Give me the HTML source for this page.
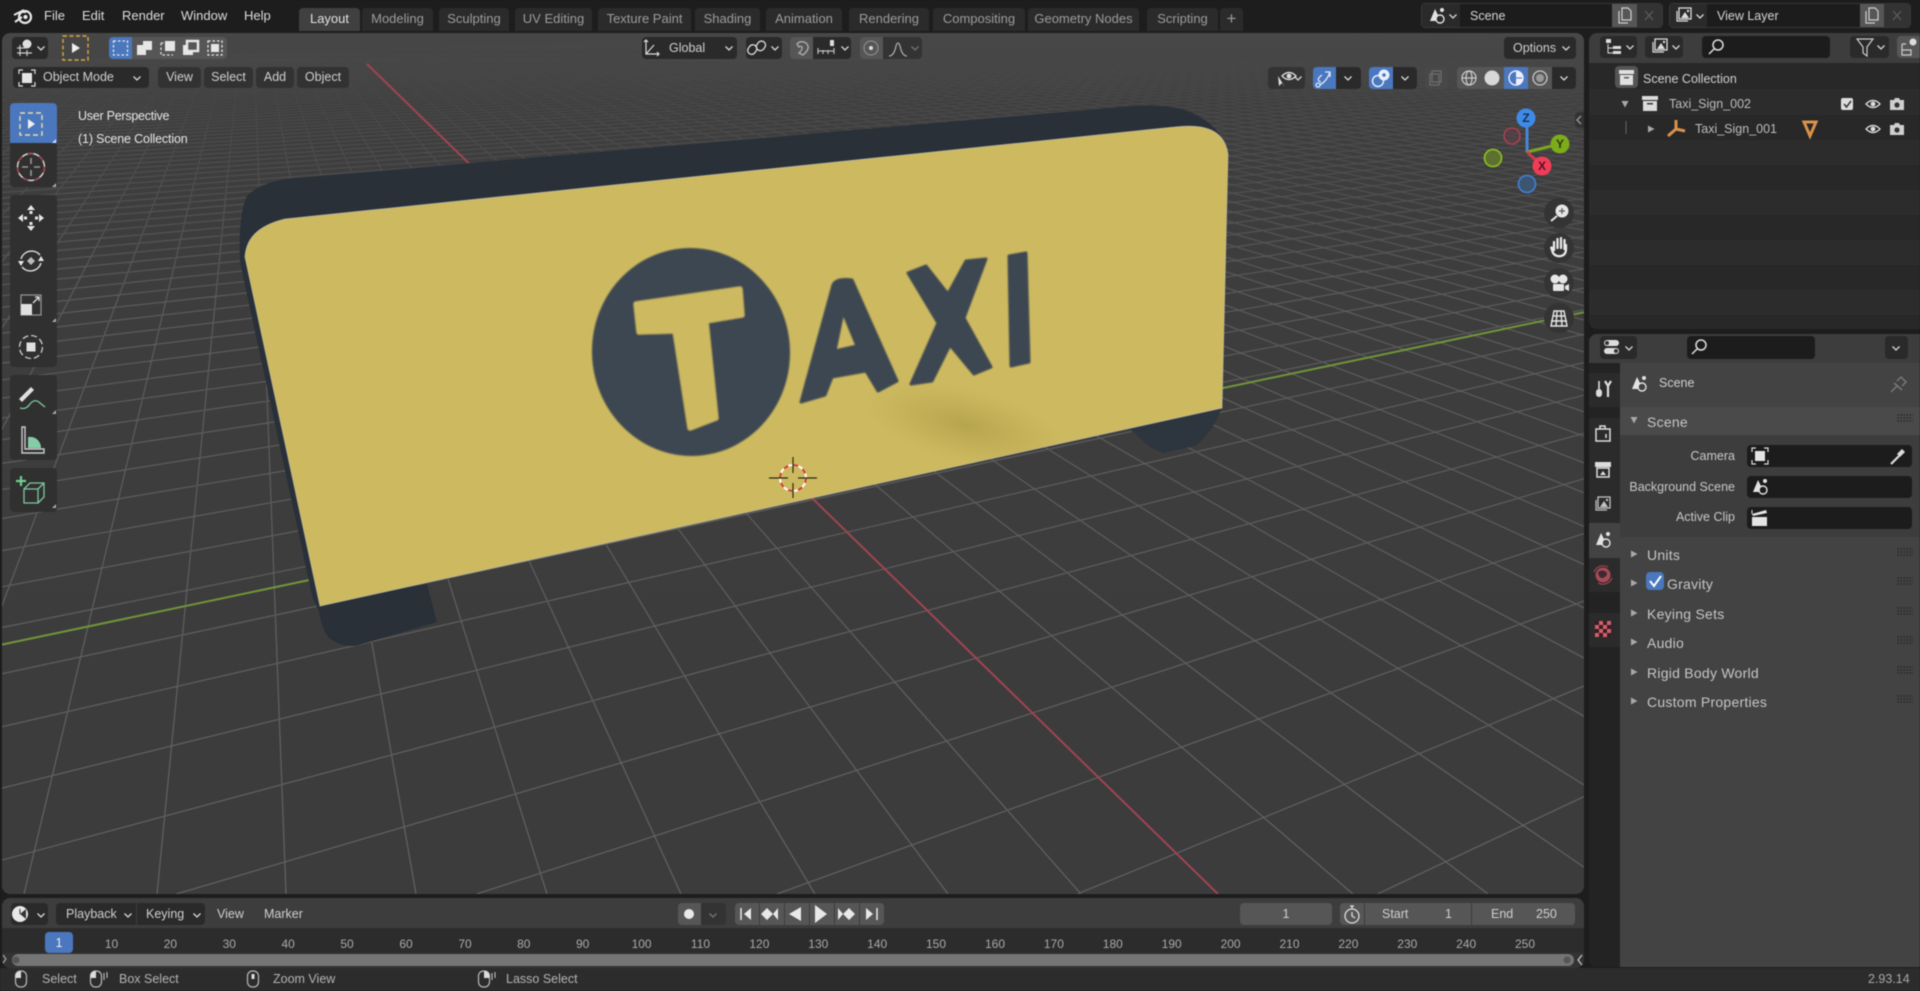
<!DOCTYPE html>
<html lang="en"><head><meta charset="utf-8"><title>Blender</title>
<style>
html,body{margin:0;padding:0;background:#1d1d1d;width:1920px;height:991px;overflow:hidden}
#r{position:absolute;left:0;top:0;width:1920px;height:991px;overflow:hidden;background:#1d1d1d;font:12.5px "Liberation Sans",sans-serif;color:#cfcfcf;filter:blur(.45px)}
#r div{position:absolute;box-sizing:border-box}
.t{white-space:nowrap;line-height:16px;height:16px}
.c{text-align:center}
.tab{top:8px;height:23px;background:#2b2b2b;border-radius:4px 4px 0 0;color:#9c9c9c;font-size:13px;line-height:22px;text-align:center;white-space:nowrap}
.d{background:#2a2a2a;border-radius:4px}
.m{background:#565656}
.b{background:#4a77bd}
.f{background:#1c1c1c;border-radius:4px}
.o{border:1px solid #383838;border-radius:4px;background:transparent}
.h{font-size:14px;letter-spacing:.25px;color:#c6c6c6}
.n{font-size:12px;color:#aaa;width:40px;text-align:center;top:936px}
svg{position:absolute;left:0;top:0}
</style></head><body><div id="r">

<!-- top bar tabs -->
<div class="t" style="left:44px;top:8px;color:#ddd;font-size:13px">File</div>
<div class="t" style="left:82px;top:8px;color:#ddd;font-size:13px">Edit</div>
<div class="t" style="left:122px;top:8px;color:#ddd;font-size:13px">Render</div>
<div class="t" style="left:181px;top:8px;color:#ddd;font-size:13px">Window</div>
<div class="t" style="left:244px;top:8px;color:#ddd;font-size:13px">Help</div>
<div class="tab" style="left:299px;width:61px;background:#404040;color:#e2e2e2">Layout</div>
<div class="tab" style="left:362px;width:71px">Modeling</div>
<div class="tab" style="left:439px;width:70px">Sculpting</div>
<div class="tab" style="left:515px;width:77px">UV Editing</div>
<div class="tab" style="left:598px;width:93px">Texture Paint</div>
<div class="tab" style="left:695px;width:65px">Shading</div>
<div class="tab" style="left:766px;width:76px">Animation</div>
<div class="tab" style="left:849px;width:80px">Rendering</div>
<div class="tab" style="left:933px;width:92px">Compositing</div>
<div class="tab" style="left:1028px;width:111px">Geometry Nodes</div>
<div class="tab" style="left:1147px;width:71px">Scripting</div>
<div class="tab" style="left:1220px;width:23px;font-size:17px">+</div>

<!-- scene / view layer -->
<div class="d" style="left:1422px;top:4px;width:38px;height:23px;border-radius:4px 0 0 4px"></div>
<div class="f" style="left:1460px;top:4px;width:152px;height:23px;border-radius:0"></div>
<div class="t" style="left:1470px;top:8px;color:#d4d4d4">Scene</div>
<div class="m" style="left:1612px;top:4px;width:25px;height:23px"></div>
<div style="left:1637px;top:4px;width:25px;height:23px;background:#333;border-radius:0 4px 4px 0"></div>
<div class="o" style="left:1421px;top:3px;width:242px;height:25px"></div>
<div class="d" style="left:1670px;top:4px;width:37px;height:23px;border-radius:4px 0 0 4px"></div>
<div class="f" style="left:1707px;top:4px;width:153px;height:23px;border-radius:0"></div>
<div class="t" style="left:1717px;top:8px;color:#d4d4d4">View Layer</div>
<div class="m" style="left:1860px;top:4px;width:24px;height:23px"></div>
<div style="left:1884px;top:4px;width:26px;height:23px;background:#333;border-radius:0 4px 4px 0"></div>
<div class="o" style="left:1669px;top:3px;width:242px;height:25px"></div>

<!-- viewport -->
<div id="vp" style="left:2px;top:33px;width:1582px;height:861px;border-radius:8px;overflow:hidden;background:linear-gradient(#474747 0,#454545 27px,#3e3e3e 70px,#3c3c3c 100%)">
<svg width="1582" height="861" viewBox="2 33 1582 861" xmlns="http://www.w3.org/2000/svg">
<defs>
<linearGradient id="fg" gradientUnits="userSpaceOnUse" x1="0" y1="50" x2="0" y2="894">
<stop offset="0" stop-color="#fff" stop-opacity=".05"/><stop offset=".08" stop-color="#fff" stop-opacity=".3"/><stop offset=".3" stop-color="#fff" stop-opacity=".8"/><stop offset="1" stop-color="#fff" stop-opacity="1"/></linearGradient>
<mask id="fm" maskUnits="userSpaceOnUse" x="0" y="0" width="1920" height="991"><rect width="1920" height="991" fill="url(#fg)"/></mask>
<radialGradient id="sm"><stop offset="0" stop-color="#a08f3c" stop-opacity=".5"/><stop offset=".6" stop-color="#ad9b45" stop-opacity=".25"/><stop offset="1" stop-color="#b8a64e" stop-opacity="0"/></radialGradient>
<filter id="bl" x="-10%" y="-10%" width="120%" height="120%"><feGaussianBlur stdDeviation=".9"/></filter>
<clipPath id="face"><path d="M245 257C246 240 256 226 285 219L1175 127C1202 124 1224 128 1228 154L1222 408L320 606Z"/></clipPath>
</defs>
<g id="grid" mask="url(#fm)" stroke="#636363" stroke-width="1.2" fill="none"></g>
<path d="M367 64L1218 894" stroke="#a04452" stroke-width="2" fill="none"/>
<path d="M0 645L1585 312" stroke="#71953a" stroke-width="2" fill="none"/>
<!-- feet -->
<path d="M314 600L319 612Q322 630 329 638Q345 650 362 644L437 622L427 584Z" fill="#293038"/>
<path d="M1125 425L1150 447L1163 453L1195 446Q1216 430 1224 400Z" fill="#2d353e"/>
<!-- back -->
<path d="M240 262Q238 215 247 196Q258 184 286 179L1122 107Q1160 103 1185 110Q1208 118 1220 135L1228 160L1222 300L320 606L313 600Z" fill="#293038"/>
<path d="M245 257C246 240 256 226 285 219L1175 127C1202 124 1224 128 1228 154L1222 408L320 606Z" fill="#cdba60" stroke="#b5b09a" stroke-width=".8"/>
<g clip-path="url(#face)"><ellipse cx="965" cy="425" rx="105" ry="38" transform="rotate(14 965 425)" fill="url(#sm)"/></g>
<!-- logo -->
<g filter="url(#bl)" fill="#3e4751">
<ellipse cx="691" cy="352" rx="99" ry="104" transform="rotate(-4 691 352)"/>
<path d="M636 304L740 289L742 315L706 321L716 418L690 428L675 331L639 332Z" fill="#cdba60" stroke="#cdba60" stroke-width="5" stroke-linejoin="round"/>
<g stroke="#3e4751" stroke-width="3" stroke-linejoin="round">
<path fill-rule="evenodd" d="M801 402L833 285Q836 278 852 280L897 381L878 391L866 371L832 377L825 395ZM843 312L835 351L857 346Z"/>
<path d="M908 273L926 266L948 294L966 261L986 259L964 318L991 367L974 374L950 345L932 381L911 384L938 323Z"/>
<path d="M1009 256L1026 253L1029 362L1011 366Z"/>
</g>
</g>
<!-- 3D cursor -->
<g transform="translate(793 478)" fill="none">
<circle r="13" stroke="#fff" stroke-width="2"/><circle r="13" stroke="#d03a28" stroke-width="2" stroke-dasharray="5 5.2"/>
<path d="M0-21V-5M0 5V20M-24 0H-5M5 0H24" stroke="#2b2b14" stroke-width="1.2"/>
</g>
</svg>
</div>

<!-- 3D header row 1 -->
<div class="d" style="left:12px;top:37px;width:36px;height:22px"></div>
<div class="d" style="left:109px;top:37px;width:118px;height:22px;background:#565656"></div>
<div class="b" style="left:109px;top:37px;width:23px;height:22px;border-radius:4px 0 0 4px"></div>
<div class="d" style="left:642px;top:37px;width:95px;height:22px"></div>
<div class="t" style="left:669px;top:40px">Global</div>
<div class="d" style="left:746px;top:37px;width:36px;height:22px"></div>
<div class="d" style="left:790px;top:37px;width:61px;height:22px"></div>
<div class="m" style="left:790px;top:37px;width:23px;height:22px;border-radius:4px 0 0 4px"></div>
<div class="d" style="left:860px;top:37px;width:62px;height:22px;background:#333"></div>
<div class="m" style="left:860px;top:37px;width:23px;height:22px;border-radius:4px 0 0 4px"></div>
<div class="d" style="left:1504px;top:37px;width:72px;height:22px"></div>
<div class="t" style="left:1513px;top:40px">Options</div>
<!-- row 2 -->
<div class="d" style="left:13px;top:67px;width:136px;height:21px"></div>
<div class="t" style="left:43px;top:69px">Object Mode</div>
<div class="d" style="left:158px;top:67px;width:43px;height:21px;background:#323232"></div>
<div class="t c" style="left:158px;width:43px;top:69px">View</div>
<div class="d" style="left:204px;top:67px;width:49px;height:21px;background:#323232"></div>
<div class="t c" style="left:204px;width:49px;top:69px">Select</div>
<div class="d" style="left:256px;top:67px;width:38px;height:21px;background:#323232"></div>
<div class="t c" style="left:256px;width:38px;top:69px">Add</div>
<div class="d" style="left:297px;top:67px;width:52px;height:21px;background:#323232"></div>
<div class="t c" style="left:297px;width:52px;top:69px">Object</div>
<!-- right row 2 -->
<div class="d" style="left:1268px;top:67px;width:37px;height:22px;background:#333"></div>
<div class="b" style="left:1313px;top:67px;width:23px;height:22px;border-radius:4px 0 0 4px"></div>
<div class="d" style="left:1336px;top:67px;width:25px;height:22px;border-radius:0 4px 4px 0"></div>
<div class="b" style="left:1369px;top:67px;width:24px;height:22px;border-radius:4px 0 0 4px"></div>
<div class="d" style="left:1393px;top:67px;width:24px;height:22px;border-radius:0 4px 4px 0"></div>
<div class="d" style="left:1425px;top:67px;width:23px;height:22px;background:#484848"></div>
<div class="m" style="left:1457px;top:67px;width:95px;height:22px;border-radius:4px 0 0 4px"></div>
<div class="b" style="left:1504px;top:67px;width:24px;height:22px"></div>
<div class="d" style="left:1552px;top:67px;width:24px;height:22px;border-radius:0 4px 4px 0"></div>

<div class="t" style="left:78px;top:108px;color:#e6e6e6;letter-spacing:-.25px">User Perspective</div>
<div class="t" style="left:78px;top:131px;color:#e6e6e6;letter-spacing:-.15px">(1) Scene Collection</div>

<!-- toolbar -->
<div class="d" style="left:10px;top:103px;width:47px;height:84px;background:#303030"></div>
<div class="b" style="left:10px;top:103px;width:47px;height:40px;border-radius:4px 4px 0 0"></div>
<div class="d" style="left:10px;top:195px;width:47px;height:172px;background:#303030"></div>
<div class="d" style="left:10px;top:375px;width:47px;height:85px;background:#303030"></div>
<div class="d" style="left:10px;top:468px;width:47px;height:44px;background:#303030"></div>
<div style="left:1575px;top:112px;width:9px;height:16px;background:#333;border-radius:4px 0 0 4px"></div>

<!-- outliner -->
<div style="left:1589px;top:33px;width:331px;height:296px;background:#282828;border-radius:8px 0 0 8px;overflow:hidden">
<div style="left:0;top:0;width:331px;height:30px;background:#3d3d3d"></div>
<div style="left:0;top:56px;width:331px;height:26px;background:#2c2c2c"></div>
<div style="left:0;top:107px;width:331px;height:25px;background:#2c2c2c"></div>
<div style="left:0;top:157px;width:331px;height:25px;background:#2c2c2c"></div>
<div style="left:0;top:207px;width:331px;height:25px;background:#2c2c2c"></div>
<div style="left:0;top:257px;width:331px;height:25px;background:#2c2c2c"></div>
</div>
<div class="d" style="left:1600px;top:36px;width:37px;height:22px"></div>
<div class="d" style="left:1645px;top:36px;width:38px;height:22px"></div>
<div class="f" style="left:1702px;top:36px;width:128px;height:22px"></div>
<div class="d" style="left:1850px;top:36px;width:39px;height:22px"></div>
<div class="m" style="left:1897px;top:36px;width:23px;height:22px;border-radius:4px 0 0 4px"></div>
<div style="left:1615px;top:66px;width:23px;height:22px;background:#555;border-radius:4px"></div>
<div class="t" style="left:1643px;top:71px;color:#d0d0d0">Scene Collection</div>
<div class="t" style="left:1669px;top:96px;color:#bdbdbd">Taxi_Sign_002</div>
<div class="t" style="left:1695px;top:121px;color:#bdbdbd">Taxi_Sign_001</div>

<!-- properties -->
<div style="left:1589px;top:334px;width:331px;height:633px;background:#434343;border-radius:8px 0 0 8px;overflow:hidden">
<div style="left:0;top:0;width:331px;height:29px;background:#3d3d3d"></div>
<div style="left:0;top:29px;width:31px;height:604px;background:#232323"></div>
<div style="left:0;top:39px;width:31px;height:34px;background:#2b2b2b"></div>
<div style="left:0;top:84px;width:31px;height:105px;background:#2b2b2b"></div>
<div style="left:0;top:224px;width:31px;height:34px;background:#2b2b2b"></div>
<div style="left:0;top:279px;width:31px;height:34px;background:#2b2b2b"></div>
<div style="left:0;top:189px;width:31px;height:35px;background:#434343"></div>
<div style="left:31px;top:73px;width:300px;height:28px;background:#4a4a4a"></div>
<div style="left:31px;top:101px;width:300px;height:102px;background:#3d3d3d"></div>
</div>
<div class="d" style="left:1600px;top:336px;width:37px;height:23px"></div>
<div class="f" style="left:1687px;top:336px;width:128px;height:23px"></div>
<div class="d" style="left:1885px;top:336px;width:23px;height:23px"></div>
<div class="t" style="left:1659px;top:375px;color:#d0d0d0">Scene</div>
<div class="t h" style="left:1647px;top:414px">Scene</div>
<div class="t" style="left:1600px;width:135px;text-align:right;top:448px;color:#c8c8c8">Camera</div>
<div class="f" style="left:1747px;top:445px;width:165px;height:22px"></div>
<div class="t" style="left:1600px;width:135px;text-align:right;top:479px;color:#c8c8c8">Background Scene</div>
<div class="f" style="left:1747px;top:476px;width:165px;height:22px"></div>
<div class="t" style="left:1600px;width:135px;text-align:right;top:509px;color:#c8c8c8">Active Clip</div>
<div class="f" style="left:1747px;top:507px;width:165px;height:22px"></div>
<div class="t h" style="left:1647px;top:547px">Units</div>
<div class="b" style="left:1646px;top:572px;width:18px;height:18px;border-radius:4px"></div>
<div class="t h" style="left:1667px;top:576px">Gravity</div>
<div class="t h" style="left:1647px;top:606px">Keying Sets</div>
<div class="t h" style="left:1647px;top:635px">Audio</div>
<div class="t h" style="left:1647px;top:665px">Rigid Body World</div>
<div class="t h" style="left:1647px;top:694px">Custom Properties</div>

<!-- timeline -->
<div style="left:2px;top:898px;width:1582px;height:70px;background:#2c2c2c;border-radius:8px;overflow:hidden">
<div style="left:0;top:0;width:1582px;height:30px;background:#3d3d3d"></div>
<div style="left:0;top:55px;width:1582px;height:15px;background:#333"></div>
<div style="left:10px;top:56px;width:1562px;height:12px;background:#757575;border-radius:6px"></div>
</div>
<div class="d" style="left:11px;top:903px;width:37px;height:22px"></div>
<div class="d" style="left:56px;top:903px;width:149px;height:22px"></div>
<div style="left:136px;top:903px;width:1px;height:22px;background:#3d3d3d"></div>
<div class="t" style="left:66px;top:906px">Playback</div>
<div class="t" style="left:146px;top:906px">Keying</div>
<div class="t" style="left:217px;top:906px">View</div>
<div class="t" style="left:264px;top:906px">Marker</div>
<div class="m" style="left:678px;top:903px;width:23px;height:22px;border-radius:4px 0 0 4px"></div>
<div class="d" style="left:701px;top:903px;width:25px;height:22px;border-radius:0 4px 4px 0;background:#333"></div>
<div class="m" style="left:735px;top:903px;width:149px;height:22px;border-radius:4px"></div>
<div style="left:759px;top:903px;width:1px;height:22px;background:#3d3d3d"></div>
<div style="left:784px;top:903px;width:1px;height:22px;background:#3d3d3d"></div>
<div style="left:809px;top:903px;width:1px;height:22px;background:#3d3d3d"></div>
<div style="left:834px;top:903px;width:1px;height:22px;background:#3d3d3d"></div>
<div style="left:859px;top:903px;width:1px;height:22px;background:#3d3d3d"></div>
<div class="m" style="left:1240px;top:903px;width:92px;height:22px;border-radius:4px"></div>
<div class="t c" style="left:1240px;width:92px;top:906px">1</div>
<div class="m" style="left:1340px;top:903px;width:235px;height:22px;border-radius:4px"></div>
<div style="left:1364px;top:903px;width:1px;height:22px;background:#3d3d3d"></div>
<div style="left:1471px;top:903px;width:1px;height:22px;background:#3d3d3d"></div>
<div class="t" style="left:1382px;top:906px">Start</div>
<div class="t" style="left:1445px;top:906px">1</div>
<div class="t" style="left:1491px;top:906px">End</div>
<div class="t" style="left:1536px;top:906px">250</div>
<div class="b" style="left:45px;top:932px;width:28px;height:21px;border-radius:4px"></div>
<div class="t c" style="left:45px;width:28px;top:935px;color:#eee">1</div>
<div class="t n" style="left:91.5px">10</div><div class="t n" style="left:150.4px">20</div><div class="t n" style="left:209.3px">30</div><div class="t n" style="left:268.2px">40</div><div class="t n" style="left:327px">50</div><div class="t n" style="left:386px">60</div><div class="t n" style="left:445px">70</div><div class="t n" style="left:503.8px">80</div><div class="t n" style="left:562.7px">90</div><div class="t n" style="left:621.6px">100</div><div class="t n" style="left:680.5px">110</div><div class="t n" style="left:739.4px">120</div><div class="t n" style="left:798.3px">130</div><div class="t n" style="left:857.2px">140</div><div class="t n" style="left:916px">150</div><div class="t n" style="left:975px">160</div><div class="t n" style="left:1033.9px">170</div><div class="t n" style="left:1092.8px">180</div><div class="t n" style="left:1151.7px">190</div><div class="t n" style="left:1210.6px">200</div><div class="t n" style="left:1269.5px">210</div><div class="t n" style="left:1328.4px">220</div><div class="t n" style="left:1387.3px">230</div><div class="t n" style="left:1446.2px">240</div><div class="t n" style="left:1505px">250</div>

<!-- status bar -->
<div style="left:0;top:968px;width:1920px;height:23px;background:#2c2c2c"></div>
<div class="t" style="left:42px;top:971px;color:#b4b4b4">Select</div>
<div class="t" style="left:119px;top:971px;color:#b4b4b4">Box Select</div>
<div class="t" style="left:273px;top:971px;color:#b4b4b4">Zoom View</div>
<div class="t" style="left:506px;top:971px;color:#b4b4b4">Lasso Select</div>
<div class="t" style="left:1868px;top:971px;color:#a8a8a8">2.93.14</div>

<!-- icon layer -->
<svg width="1920" height="991" viewBox="0 0 1920 991" xmlns="http://www.w3.org/2000/svg" style="z-index:5">
<defs>
<path id="ch" d="M-3.5-1.5L0 2L3.5-1.5" fill="none" stroke="#d8d8d8" stroke-width="1.3"/>
<path id="tr" d="M-3-3.5L3.5 0L-3 3.5Z" fill="#a8a8a8"/>
<path id="td" d="M-3.5-3L3.5-3L0 3.5Z" fill="#a8a8a8"/>
<g id="sc"><path d="M-7 5L-2-7L1-1Q-1 2 0 5Z" fill="#e2e2e2"/><circle cx="5" cy="-6" r="2" fill="#e2e2e2"/><circle cx="3" cy="3" r="4" fill="none" stroke="#e2e2e2" stroke-width="1.4"/></g>
<g id="cp" fill="none" stroke="#cfcfcf" stroke-width="1.2"><path d="M-3-7H3L6-4V5H-3Z"/><path d="M-6-4V8H3"/></g>
<g id="vl"><rect x="-5" y="-7" width="12" height="11" fill="none" stroke="#ddd" stroke-width="1.3"/><path d="M-3 3L1-3L5 3Z" fill="#ddd"/><circle cx="4" cy="-4" r="1.2" fill="#ddd"/><path d="M-7-4V6H4" fill="none" stroke="#ddd" stroke-width="1.2"/></g>
<g id="lens" fill="none" stroke="#ddd" stroke-width="1.5"><circle cx="2" cy="-2" r="5"/><path d="M-2 2L-7 7"/></g>
<g id="eye"><path d="M-7 0Q0-7 7 0Q0 7-7 0Z" fill="none" stroke="#ddd" stroke-width="1.3"/><circle r="2.4" fill="#ddd"/></g>
<g id="cam"><path d="M-7-4H-3L-2-6H2L3-4H7V6H-7Z" fill="#cfcfcf"/><circle cy="1" r="2.6" fill="#333"/></g>
<g id="gr" fill="none" stroke-width="1.2" stroke-dasharray="1.3 1.7"><path d="M-7.5-3H8M-7.5 0H8M-7.5 3H8" stroke="#1e1e1e"/></g>
<g id="ms"><rect x="-5.5" y="-8" width="11" height="16" rx="5" fill="none" stroke="#b8b8b8" stroke-width="1.2"/></g>
<g id="ml"><path d="M0-8A5.5 5 0 0 0-5.5-3V-1H0Z" fill="#ddd"/></g>
<g id="mr"><path d="M0-8A5.5 5 0 0 1 5.5-3V-1H0Z" fill="#ddd"/></g>
<path id="da" d="M-7-7H7V7H-7Z" fill="none" stroke="#e8e8e8" stroke-width="1.3" stroke-dasharray="2.5 2"/>
</defs>

<!-- blender logo -->
<g transform="translate(23 16)"><circle cx="2" cy="1" r="6" fill="none" stroke="#e8e8e8" stroke-width="2.2"/><path d="M-9-1L1-6M-8 6L-1 1M-3-4L3-4" stroke="#e8e8e8" stroke-width="2" fill="none"/><circle cx="2.5" cy="1" r="2.1" fill="#e8e8e8"/></g>

<!-- header icons -->
<g transform="translate(24 48)"><circle cx="3" cy="-4" r="4.5" fill="#e0e0e0"/><path d="M-7 0H2M-7 5H8M-4-3V8M3 2V8" stroke="#ccc" stroke-width="1.2" fill="none"/></g>
<use href="#ch" x="41" y="48"/>
<rect x="63" y="36" width="25" height="24" fill="none" stroke="#d9a63c" stroke-width="1.4" stroke-dasharray="4 2.5"/>
<path d="M72 43V53L80 48Z" fill="#f0f0f0"/>
<use href="#da" x="120.5" y="48"/>
<path d="M137 45H143V41H152V50H146V55H137Z" fill="#e6e6e6"/>
<path d="M161 43H165M161 43V55H173" fill="none" stroke="#ddd" stroke-width="1.3" stroke-dasharray="2.5 2"/><path d="M165 41H175V51H165Z" fill="#e6e6e6"/>
<path d="M183 45V55H193V51H187V45Z" fill="#e6e6e6"/><rect x="187" y="41" width="11" height="10" fill="none" stroke="#e6e6e6" stroke-width="2.5"/>
<use href="#da" x="215" y="48"/><rect x="211" y="44" width="8" height="8" fill="#e6e6e6"/>

<!-- global orientation -->
<g fill="none" stroke="#ddd" stroke-width="1.2" transform="translate(651 48)"><path d="M-5-8V6H8M-5 6L3-3"/><path d="M-7-6L-5-8L-3-6M6 4L8 6L6 8"/></g>
<use href="#ch" x="729" y="48"/>
<g transform="translate(757 48)" fill="none" stroke="#ddd" stroke-width="1.3"><rect x="-7" y="-1" width="8" height="10" rx="4" transform="rotate(35)"/><rect x="-2" y="-9" width="8" height="10" rx="4" transform="rotate(35)"/></g>
<use href="#ch" x="775" y="48"/>
<path d="M797 44A6.5 6.5 0 0 1 808 46Q809 50 803 55L799 53Q803 49 802 47A2 2 0 0 0 799 47Z" fill="none" stroke="#aaa" stroke-width="1.4"/>
<g transform="translate(825 48)"><rect x="5" y="-8" width="4" height="6" fill="#ddd"/><path d="M-7 0V6M-2 2V6M3 2V6M9 0V6M-7 3H9" stroke="#bbb" stroke-width="1.2" fill="none"/></g>
<use href="#ch" x="845" y="48"/>
<circle cx="871" cy="48" r="7" fill="none" stroke="#888" stroke-width="1.3"/><circle cx="871" cy="48" r="2" fill="#ddd"/>
<path d="M889 56Q894 56 896 46Q898 40 900 46Q902 56 907 56" fill="none" stroke="#aaa" stroke-width="1.3"/>
<use href="#ch" x="915" y="48" opacity=".4"/>
<use href="#ch" x="1566" y="48"/>
<use href="#ch" x="137" y="78"/>
<g transform="translate(27 78)"><path d="M-8-4V-8H-4M4-8H8V-4M8 4V8H4M-4 8H-8V4" fill="none" stroke="#ddd" stroke-width="1.2"/><rect x="-5" y="-5" width="10" height="10" fill="#e4e4e4"/></g>

<!-- right header icons -->
<g transform="translate(1286 78)"><use href="#eye" x="3" y="-2"/><path d="M-8-2L-7 8L-4 5L-1 9" fill="#ddd"/></g>
<use href="#ch" x="1298" y="78"/>
<g transform="translate(1324 78)" fill="none" stroke="#dfe9fa" stroke-width="1.3"><path d="M-4 7Q3 3 6-6M1-6H6V-1M-2-3Q-9 2-3 4"/><circle cx="-6" cy="7" r="2"/></g>
<use href="#ch" x="1348" y="78"/>
<g transform="translate(1381 78)"><circle cx="-3" cy="3" r="5.5" fill="none" stroke="#e8f0ff" stroke-width="1.4"/><circle cx="3" cy="-3" r="5.5" fill="#e8f0ff"/><circle cx="3" cy="-3" r="1.8" fill="#4a77bd"/></g>
<use href="#ch" x="1405" y="78"/>
<g transform="translate(1437 78)" fill="none" stroke="#6e6e6e" stroke-width="1.2"><rect x="-5" y="-7" width="9" height="11"/><rect x="-7" y="-4" width="9" height="11"/></g>
<g transform="translate(1469 78)" fill="none" stroke="#ccc" stroke-width="1.2"><circle r="7"/><ellipse rx="3" ry="7"/><path d="M-7 0H7"/></g>
<circle cx="1492" cy="78" r="7.5" fill="#d8d8d8"/>
<circle cx="1516" cy="78" r="7" fill="none" stroke="#eef" stroke-width="1.4"/><path d="M1516 71A7 7 0 0 1 1516 85Z" fill="#eef"/><path d="M1516 78H1522" stroke="#4a77bd"/>
<circle cx="1540" cy="78" r="7" fill="none" stroke="#c8c8c8" stroke-width="1.3"/><circle cx="1540" cy="78" r="4" fill="#999"/>
<use href="#ch" x="1564" y="78"/>

<!-- sidebar arrow -->
<path d="M1581 116L1577 120L1581 124" fill="none" stroke="#aaa" stroke-width="1.2"/>

<!-- gizmo -->
<g font-family="Liberation Sans,sans-serif" font-size="12" font-weight="bold" text-anchor="middle">
<path d="M1527 152L1527 118" stroke="#4a84d8" stroke-width="3"/><path d="M1527 152L1560 144" stroke="#7ba51f" stroke-width="3"/><path d="M1527 152L1542 166" stroke="#cf3a50" stroke-width="3"/>
<circle cx="1512" cy="136" r="8" fill="#60404a" fill-opacity=".5" stroke="#a8404f" stroke-width="1.6"/>
<circle cx="1493" cy="158" r="8.5" fill="#5d7030" stroke="#8ab820" stroke-width="1.8"/>
<circle cx="1527" cy="184" r="8.5" fill="#3c5570" stroke="#3f7ccc" stroke-width="1.8"/>
<circle cx="1526" cy="118" r="9.5" fill="#3f8ae8"/><text x="1526" y="122" fill="#14304f">Z</text>
<circle cx="1560" cy="144" r="9.5" fill="#7cab1c"/><text x="1560" y="148" fill="#2b3d08">Y</text>
<circle cx="1542" cy="166" r="9.5" fill="#ef3d58"/><text x="1542" y="170" fill="#5a1020">X</text>
</g>
<!-- nav buttons -->
<g fill="#343434"><circle cx="1559" cy="213" r="15"/><circle cx="1559" cy="248" r="15"/><circle cx="1559" cy="283" r="15"/><circle cx="1559" cy="318" r="15"/></g>
<g transform="translate(1560 213)"><circle cx="2" cy="-2" r="6.5" fill="#e6e6e6"/><path d="M-3 3L-9 8" stroke="#e6e6e6" stroke-width="2"/><path d="M2-5V1M-1-2H5" stroke="#555" stroke-width="1.2"/></g>
<path d="M1554 250V242M1557.5 248V239M1561 248V238M1564.5 249V240M1554 250L1551 247L1553 253Q1556 257 1561 256Q1566 255 1566 249V245" fill="none" stroke="#e8e8e8" stroke-width="2.3" stroke-linecap="round"/>
<g transform="translate(1559 283)" fill="#e6e6e6"><circle cx="-4" cy="-4" r="4.5"/><circle cx="4" cy="-4" r="4.5"/><rect x="-6" y="1" width="11" height="7" rx="1"/><path d="M6 3L10 1V8L6 6Z"/></g>
<g transform="translate(1559 319)" fill="none" stroke="#e6e6e6" stroke-width="1.4"><path d="M-5-8H5L8 7H-8Z"/><path d="M-6.5-3H6.5M-8 2H8M-2-8L-3 7M2-8L3 7"/></g>

<!-- toolbar icons -->
<rect x="20" y="113" width="22" height="22" fill="none" stroke="#e8dcae" stroke-width="1.4" stroke-dasharray="5 3"/>
<path d="M28 119V129L35 124Z" fill="#f0f0f0"/><path d="M52 143L56 143L56 139Z" fill="#cfe0ff"/>
<g transform="translate(31 167)" fill="none"><circle r="13.5" stroke="#ddd" stroke-width="1.4"/><circle r="13.5" stroke="#a33c48" stroke-width="1.4" stroke-dasharray="6 6"/><path d="M-9 0H-3M3 0H9M0-9V-3M0 3V9" stroke="#999" stroke-width="1.6"/></g>
<g transform="translate(31 218)" fill="#e6e6e6"><path d="M0-13L4-8H-4ZM0 13L4 8H-4ZM-13 0L-8-4V4ZM13 0L8-4V4Z"/><rect x="-1.5" y="-7" width="3" height="3"/><rect x="-1.5" y="4" width="3" height="3"/><rect x="-7" y="-1.5" width="3" height="3"/><rect x="4" y="-1.5" width="3" height="3"/></g>
<g transform="translate(31 261)"><path d="M-10-2A11 11 0 0 1 9-6M10 2A11 11 0 0 1-9 6" fill="none" stroke="#ddd" stroke-width="1.4"/><path d="M0-4L4 0L0 4L-4 0Z" fill="#bbb"/><path d="M-13 0H-7L-10 5ZM13 0H7L10-5Z" fill="#e6e6e6"/></g>
<g transform="translate(31 305)"><rect x="-10" y="-10" width="20" height="20" fill="none" stroke="#999" stroke-width="1.2"/><rect x="-10" y="-1" width="11" height="11" fill="#e0e0e0"/><path d="M2-2L8-8M4-8H8V-4" fill="none" stroke="#e0e0e0" stroke-width="1.3"/></g>
<g transform="translate(31 347)"><circle r="11.5" fill="none" stroke="#ccc" stroke-width="1.3" stroke-dasharray="6 3"/><rect x="-4.5" y="-4.5" width="9" height="9" fill="#e0e0e0"/></g>
<g transform="translate(31 400)"><path d="M-12-1L0-13L3-10L-9 2Z" fill="#e0e0e0"/><path d="M-11 8Q-5 10-1 4Q4-2 9 3L14 7" fill="none" stroke="#7fc8a0" stroke-width="1.3"/></g>
<g transform="translate(31 440)"><path d="M-9-13H-6V9H13V13H-9Z" fill="none" stroke="#ccc" stroke-width="1.4"/><path d="M-3 8V-3A11 11 0 0 1 10 8Z" fill="#86cca9"/></g>
<g transform="translate(31 490)" fill="none" stroke="#7fc8a0" stroke-width="1.3"><path d="M-7-1H7V13H-7ZM-7-1L-1-7H13V7L7 13M7-1L13-7"/><path d="M-10-14V-4M-15-9H-5" stroke="#6fd08e" stroke-width="2.2"/></g>
<path d="M52 187L56 187L56 183ZM52 322L56 322L56 318ZM52 414L56 414L56 410ZM52 508L56 508L56 504Z" fill="#aaa"/>

<!-- scene bar icons -->
<use href="#sc" x="1437" y="16"/><use href="#ch" x="1453" y="16"/>
<use href="#cp" x="1625" y="15"/>
<path d="M1645 11L1653 20M1653 11L1645 20" stroke="#5e5e5e" stroke-width="1.2"/>
<use href="#vl" x="1684" y="15"/><use href="#ch" x="1700" y="16"/>
<use href="#cp" x="1872" y="15"/>
<path d="M1893 11L1901 20M1901 11L1893 20" stroke="#5e5e5e" stroke-width="1.2"/>

<!-- outliner icons -->
<g transform="translate(1614 47)" fill="#ddd"><rect x="-8" y="-8" width="5" height="4"/><rect x="-1" y="-1" width="8" height="3"/><rect x="-1" y="4" width="8" height="3"/><path d="M-6-3V6H-1M-6 1H-1" fill="none" stroke="#ddd"/></g>
<use href="#ch" x="1630" y="47"/>
<use href="#vl" x="1660" y="46"/><use href="#ch" x="1676" y="47"/>
<use href="#lens" x="1716" y="47"/>
<path d="M1857 39H1873L1867 47V56L1863 53V47Z" fill="none" stroke="#ccc" stroke-width="1.2"/><use href="#ch" x="1881" y="47"/>
<g transform="translate(1908 47)"><path d="M-6-3H-2M-6-3V8H3V3H-2M-6 3H-2" fill="none" stroke="#ccc" stroke-width="1.2"/><circle cx="5" cy="-5" r="3.5" fill="#ddd"/></g>
<g id="coll"><path d="M1619 70H1634V74H1619ZM1620 75H1633V85H1620Z" fill="#e0e0e0"/><rect x="1624" y="77" width="5" height="1.5" fill="#555"/></g>
<use href="#td" x="1625" y="104"/>
<path d="M1642 96H1658V100H1642ZM1643 101H1657V111H1643Z" fill="#dcdcdc"/><rect x="1647" y="103" width="6" height="1.5" fill="#333"/>
<rect x="1841" y="98" width="12" height="12" rx="2" fill="#ddd"/><path d="M1844 104L1846.5 107L1851 101" fill="none" stroke="#333" stroke-width="1.5"/>
<use href="#eye" x="1873" y="104"/><use href="#cam" x="1897" y="104"/>
<path d="M1626 121V134" stroke="#666"/>
<use href="#tr" x="1651" y="129"/>
<path d="M1676 120V129M1676 129L1668 136M1676 129L1685 131" stroke="#d9924a" stroke-width="3" fill="none"/>
<path d="M1804 122H1816L1810 136Z" fill="none" stroke="#d9924a" stroke-width="3"/>
<use href="#eye" x="1873" y="129"/><use href="#cam" x="1897" y="129"/>

<!-- properties header -->
<g transform="translate(1612 347)"><rect x="-8" y="-7" width="15" height="6" rx="3" fill="#ddd"/><rect x="-8" y="1" width="15" height="6" rx="3" fill="#ddd"/><circle cx="-5" cy="-4" r="2" fill="#333"/><circle cx="4" cy="4" r="2" fill="#333"/></g>
<use href="#ch" x="1629" y="348"/>
<use href="#lens" x="1699" y="347"/>
<use href="#ch" x="1896" y="348"/>
<!-- property tabs -->
<g transform="translate(1603 389)"><path d="M-4-8V0" stroke="#ddd" stroke-width="1.6"/><rect x="-7" y="0" width="6" height="8" rx="3" fill="#ddd"/><path d="M2-8L5-3L8-8M5-3V8" fill="none" stroke="#ddd" stroke-width="2.2"/></g>
<g transform="translate(1603 434)" fill="none" stroke="#ddd" stroke-width="1.5"><rect x="-7" y="-5" width="14" height="12"/><path d="M-3-5V-8H2V-5M3 0V4" /></g>
<g transform="translate(1603 469)"><path d="M-8-7H8V-2H-8Z" fill="#ddd"/><rect x="-6" y="-1" width="12" height="9" fill="none" stroke="#ddd" stroke-width="1.5"/><path d="M-3 6L0 2L3 6Z" fill="#ddd"/></g>
<use href="#vl" x="1603" y="504" opacity=".85"/>
<use href="#sc" x="1603" y="540"/>
<g transform="translate(1603 575)"><circle r="7.5" fill="#a84a58"/><path d="M-5-3Q0-6 3-3T0 3Q-4 4-5-3ZM4 2L6 4" fill="#3c2a30"/><path d="M-9-3A10 10 0 0 1 5-8M9 3A10 10 0 0 1-5 8" fill="none" stroke="#a84a58"/></g>
<g transform="translate(1603 629)"><rect x="-8" y="-8" width="16" height="16" fill="#d0606c"/><path d="M-8-8H-4V-4H-8ZM0-8H4V-4H0ZM-4-4H0V0H-4ZM4-4H8V0H4ZM-8 0H-4V4H-8ZM0 0H4V4H0ZM-4 4H0V8H-4ZM4 4H8V8H4Z" fill="#3a1c20"/></g>
<!-- properties content icons -->
<use href="#sc" x="1639" y="384"/>
<g transform="translate(1898 384)" fill="none" stroke="#777" stroke-width="1.5"><path d="M-7 8L-1 2M-4-1L4 6M-1-3L3-7L8-2L4 2"/></g>
<use href="#td" x="1634" y="420"/>
<use href="#gr" x="1905" y="418"/>
<g transform="translate(1760 456)"><path d="M-8-4V-8H-4M4-8H8V-4M8 4V8H4M-4 8H-8V4" fill="none" stroke="#ddd" stroke-width="1.2"/><rect x="-5" y="-5" width="10" height="10" fill="#e4e4e4"/></g>
<g transform="translate(1898 456)"><path d="M-7 8L1 0" stroke="#ddd" stroke-width="2.2"/><path d="M-1-2L4-7L7-4L2 1Z" fill="#ddd"/></g>
<use href="#sc" x="1760" y="487"/>
<g transform="translate(1760 518)" fill="#e4e4e4"><rect x="-8" y="-1" width="15" height="9"/><path d="M-8-4L6-8L7-5L-7-2Z"/><path d="M-8-8V-4" stroke="#e4e4e4" fill="none"/></g>
<use href="#tr" x="1634" y="554"/><use href="#gr" x="1905" y="552"/>
<use href="#tr" x="1634" y="583"/><use href="#gr" x="1905" y="581"/>
<path d="M1650 581L1654 586L1661 576" fill="none" stroke="#fff" stroke-width="2"/>
<use href="#tr" x="1634" y="613"/><use href="#gr" x="1905" y="611"/>
<use href="#tr" x="1634" y="642"/><use href="#gr" x="1905" y="640"/>
<use href="#tr" x="1634" y="672"/><use href="#gr" x="1905" y="670"/>
<use href="#tr" x="1634" y="701"/><use href="#gr" x="1905" y="699"/>

<!-- timeline icons -->
<g transform="translate(20 914)"><circle r="8" fill="#e8e8e8"/><path d="M0 0L6-5V5Z" fill="#333"/><path d="M0 0V-5" stroke="#333"/></g>
<use href="#ch" x="41" y="915"/>
<use href="#ch" x="128" y="915"/><use href="#ch" x="197" y="915"/>
<circle cx="689" cy="914" r="5" fill="#e8e8e8"/><use href="#ch" x="713" y="915" opacity=".4"/>
<g fill="#e8e8e8">
<path d="M741 908V920" stroke="#e8e8e8" stroke-width="1.5"/><path d="M751 908L744 914L751 920Z"/>
<path d="M761 914L767 908L773 914L767 920ZM778 908L773 914L778 920Z"/>
<path d="M801 907L789 914L801 921Z"/>
<path d="M815 905L827 914L815 923Z"/>
<path d="M838 908L843 914L838 920ZM843 914L849 908L855 914L849 920Z"/>
<path d="M866 908L873 914L866 920Z"/><path d="M877 908V920" stroke="#e8e8e8" stroke-width="1.5"/>
</g>
<g transform="translate(1352 915)" fill="none" stroke="#ddd" stroke-width="1.3"><circle cy="1" r="7"/><path d="M0-3V1L3 3M-2-9H2M0-9V-6"/></g>
<circle cx="16" cy="960" r="3.5" fill="#555"/><circle cx="1567" cy="960" r="3.5" fill="#555"/>
<path d="M3 955L6 959L3 963" fill="none" stroke="#aaa" stroke-width="1.1"/>
<path d="M1582 955L1578 960L1582 965" fill="none" stroke="#ccc" stroke-width="1.2"/>

<!-- status icons -->
<use href="#ms" x="21" y="979"/><use href="#ml" x="21" y="979"/>
<use href="#ms" x="96" y="979"/><use href="#ml" x="96" y="979"/><path d="M104 973V980M107 972V978" stroke="#ccc"/>
<use href="#ms" x="253" y="979"/><rect x="251.5" y="974" width="3" height="5" fill="#ddd"/>
<use href="#ms" x="484" y="979"/><use href="#mr" x="484" y="979"/><path d="M492 973V980M495 972V978" stroke="#ccc"/>
</svg>
<script>
(function(){
var g=document.getElementById('grid'),NS='http://www.w3.org/2000/svg',out=[];
function add(ax,ay,bx,by){out.push('M'+ax.toFixed(1)+' '+ay.toFixed(1)+'L'+bx.toFixed(1)+' '+by.toFixed(1));}
var V1=[250,-51],V2=[3380,-51];
var list=[24,157,286,416,547,681,815,948,1081,1353,1488];
var k;
for(k=1;k<=40;k++)list.push(24-131*k);
for(k=1;k<=80;k++)list.push(1488+135*k);
list.forEach(function(X){
  /* line through (X,894) and V1; keep only the part inside the viewport */
  var sx=(X-V1[0])/(894-V1[1]);
  var x1=X,y1=894;
  if(X<0){x1=0;y1=V1[1]+(0-V1[0])/sx;}
  if(X>1590){x1=1590;y1=V1[1]+(1590-V1[0])/sx;}
  if(y1<=60)return;
  add(x1,y1,V1[0]+sx*(60-V1[1]),60);
});
for(k=-14;k<=80;k++){
  var w=0.9655+0.054*k;
  var y=-51+532/w;
  var x=367+1.02*(y-64);
  var s=(y-V2[1])/(x-V2[0]);
  var ax=0,ay=V2[1]+s*(0-V2[0]);
  if(ay>894){ay=894;ax=V2[0]+(894-V2[1])/s;}
  if(ax>=1590)continue;
  add(ax,ay,1590,V2[1]+s*(1590-V2[0]));
}
var p=document.createElementNS(NS,'path');p.setAttribute('d',out.join(''));g.appendChild(p);
})();
</script>
</div></body></html>
